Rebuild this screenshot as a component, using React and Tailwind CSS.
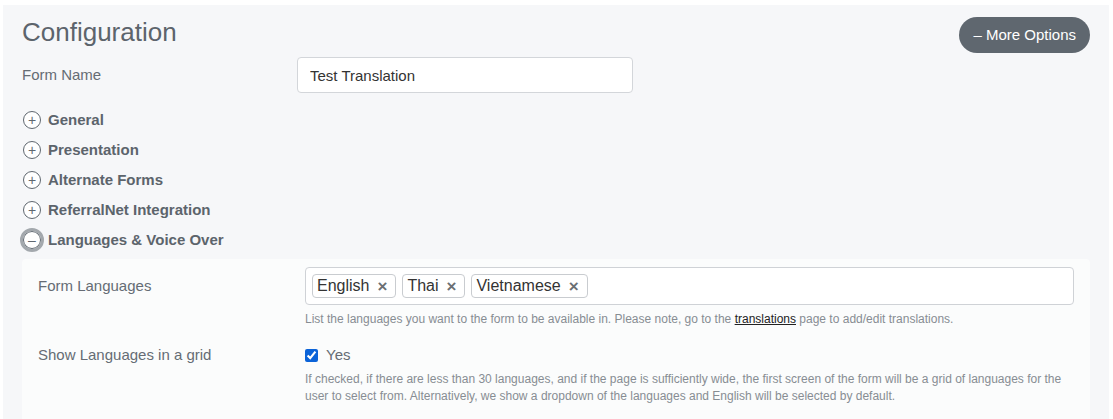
import React, { useState } from "react";

const sections = [
  "General",
  "Presentation",
  "Alternate Forms",
  "ReferralNet Integration",
];

const Toggle = ({ open }) => (
  <span
    className={`flex h-[18px] w-[18px] shrink-0 items-center justify-center rounded-full border border-[#5f676f] bg-white text-[14px] leading-none text-[#5f676f] ${
      open ? "outline-[3px] outline-solid outline-[#a3a8ad]" : ""
    }`}
  >
    {open ? "–" : "+"}
  </span>
);

const Tag = ({ label }) => (
  <span className="flex h-[24px] items-center gap-[8px] rounded-[4px] border border-[#c9ccd0] bg-white pl-[4px] pr-[8px] text-[16px] text-[#333]">
    {label}
    <span className="text-[17px] font-bold leading-none text-[#6b6f73]">×</span>
  </span>
);

const App = () => {
  const [langs] = useState(["English", "Thai", "Vietnamese"]);
  const [grid, setGrid] = useState(true);

  return (
    <div className="min-h-[419px] bg-white pl-[3px] pr-[4px] pt-[5px] font-['Liberation_Sans',Arial,sans-serif]">
      <div className="min-h-[414px] bg-[#f6f7f9] px-[19px] pt-[12px]">
        {/* header */}
        <div className="flex items-start justify-between">
          <h3 className="text-[26px] leading-[31px] text-[#5c646c]">Configuration</h3>
          <button className="h-[36px] rounded-full bg-[#5f676f] px-[14px] text-[15px] text-white">
            – More Options
          </button>
        </div>

        {/* form name */}
        <div className="mt-[4px] flex items-center">
          <label className="w-[275px] text-[15px] text-[#656c74]">Form Name</label>
          <input
            defaultValue="Test Translation"
            className="h-[36px] w-[336px] rounded-[4px] border border-[#d3d6da] bg-white px-[12px] text-[15px] text-[#333] outline-none"
          />
        </div>

        {/* sections */}
        <div className="mt-[12px] flex flex-col">
          {sections.map((s) => (
            <div key={s} className="flex h-[30px] items-center gap-[7px] pl-[1px]">
              <Toggle />
              <span className="text-[15px] font-bold text-[#5c646c]">{s}</span>
            </div>
          ))}
          <div className="flex h-[30px] items-center gap-[7px] pl-[1px]">
            <Toggle open />
            <span className="text-[15px] font-bold text-[#5c646c]">Languages &amp; Voice Over</span>
          </div>
        </div>

        {/* languages panel */}
        <div className="mt-[4px] min-h-[160px] rounded-t-[4px] bg-[#fbfcfc] px-[16px] pt-[8px]">
          <div className="flex">
            <label className="w-[267px] shrink-0 text-[15px] leading-[38px] text-[#656c74]">
              Form Languages
            </label>
            <div className="flex-1">
              <div className="flex h-[38px] items-center gap-[6px] rounded-[4px] border border-[#cfd2d6] bg-white px-[6px]">
                {langs.map((l) => (
                  <Tag key={l} label={l} />
                ))}
              </div>
              <p className="mt-[5px] text-[12px] leading-[18px] text-[#878d93]">
                List the languages you want to the form to be available in. Please note, go to the{" "}
                <a href="#" className="font-medium text-[#222] underline">
                  translations
                </a>{" "}
                page to add/edit translations.
              </p>
            </div>
          </div>

          <div className="mt-[16px] flex">
            <label className="w-[267px] shrink-0 text-[15px] leading-[22px] text-[#656c74]">
              Show Languages in a grid
            </label>
            <div className="flex-1">
              <label className="flex h-[22px] items-center gap-[8px] text-[15px] text-[#656c74]">
                <input
                  type="checkbox"
                  checked={grid}
                  onChange={() => setGrid(!grid)}
                  className="m-0 h-[13px] w-[13px] accent-[#0b63d8]"
                />
                Yes
              </label>
              <p className="mt-[5px] text-[12px] leading-[17px] text-[#878d93]">
                If checked, if there are less than 30 languages, and if the page is sufficiently wide, the first screen of the form will be a grid of languages for the
                <br />
                user to select from. Alternatively, we show a dropdown of the languages and English will be selected by default.
              </p>
            </div>
          </div>
        </div>
      </div>
    </div>
  );
};

export default App;
